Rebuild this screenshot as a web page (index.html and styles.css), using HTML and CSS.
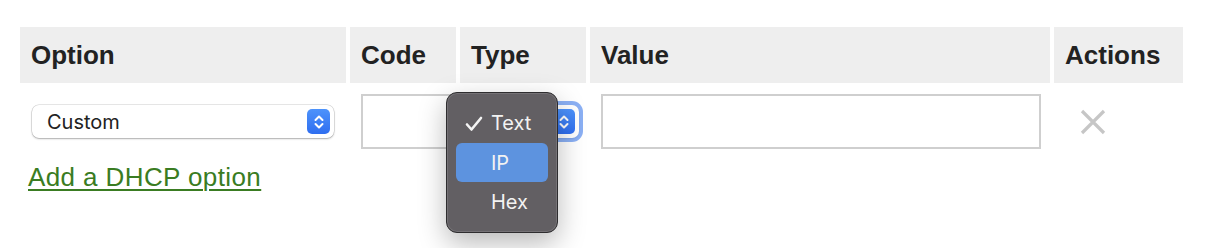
FILE: index.html
```html
<!DOCTYPE html>
<html>
<head>
<meta charset="utf-8">
<link rel="stylesheet" href="styles.css">
</head>
<body>
<div class="grid">
  <div class="th">Option</div>
  <div class="th">Code</div>
  <div class="th">Type</div>
  <div class="th">Value</div>
  <div class="th">Actions</div>

  <div class="td">
    <div class="select wide"><span class="sel-text">Custom</span><span class="stepper"><svg width="12" height="16" viewBox="0 0 12 16"><path d="M2.5 6 L6 2.5 L9.5 6 M2.5 10 L6 13.5 L9.5 10" fill="none" stroke="#fff" stroke-width="2" stroke-linecap="round" stroke-linejoin="round"/></svg></span></div>
  </div>
  <div class="td"><div class="input code"></div></div>
  <div class="td type-cell">
    <div class="select narrow focus"><span class="sel-text"></span><span class="stepper"><svg width="12" height="16" viewBox="0 0 12 16"><path d="M2.5 6 L6 2.5 L9.5 6 M2.5 10 L6 13.5 L9.5 10" fill="none" stroke="#fff" stroke-width="2" stroke-linecap="round" stroke-linejoin="round"/></svg></span></div>
    <div class="menu">
      <div class="item"><svg class="check" width="18" height="16" viewBox="0 0 18 16"><path d="M2 8.5 L6.5 13.5 L16 2" fill="none" stroke="#f4f4f4" stroke-width="2.6" stroke-linecap="round" stroke-linejoin="round"/></svg>Text</div>
      <div class="item active">IP</div>
      <div class="item">Hex</div>
    </div>
  </div>
  <div class="td"><div class="input value"></div></div>
  <div class="td actions"><svg class="x" width="26" height="26" viewBox="0 0 26 26"><path d="M2 2 L24 24 M24 2 L2 24" stroke="#c6c6c6" stroke-width="3.2"/></svg></div>
</div>
<div class="add"><a href="#">Add a DHCP option</a></div>
</body>
</html>
```
FILE: styles.css
```css
html, body {
  margin: 0;
  padding: 0;
  background: #fff;
}
body {
  padding: 27px 0 0 20px;
  min-height: 248px;
  box-sizing: border-box;
  font-family: "Liberation Sans", Arial, sans-serif;
}
.grid {
  display: grid;
  grid-template-columns: 326px 106px 126px 460px 129px;
  column-gap: 4px;
  width: 1163px;
}
.th {
  background: #eeeeee;
  height: 56px;
  display: flex;
  align-items: center;
  padding-left: 11px;
  font-weight: bold;
  font-size: 26px;
  color: #222;
}
.td {
  height: 75px;
  display: flex;
  align-items: center;
  padding-left: 11px;
  padding-top: 2px;
  box-sizing: border-box;
}
.td.actions {
  padding-left: 26px;
}
.select {
  height: 33px;
  box-sizing: border-box;
  border-radius: 7px;
  background: #fff;
  box-shadow: 0 0 0 0.5px rgba(0,0,0,0.18), 0 1px 2px rgba(0,0,0,0.25);
  display: flex;
  align-items: center;
  justify-content: space-between;
  padding: 0 4px 0 15px;
  font-family: "Inter", "Liberation Sans", sans-serif;
  font-size: 20px;
  color: #222;
}
.select.wide {
  width: 302px;
  margin-left: 1px;
}
.select.narrow {
  width: 108px;
}
.select.focus {
  box-shadow: 0 0 0 4px rgba(100,150,240,0.75), 0 1px 2px rgba(0,0,0,0.25);
}
.stepper {
  width: 23px;
  height: 25px;
  border-radius: 5px;
  background: linear-gradient(#4d93fb, #2f6ef0);
  display: flex;
  align-items: center;
  justify-content: center;
}
.input {
  height: 55px;
  box-sizing: border-box;
  border: 2px solid #cfcfcf;
  background: #fff;
}
.input.code {
  width: 95px;
}
.input.value {
  width: 440px;
}
.type-cell {
  position: relative;
}
.menu {
  position: absolute;
  left: -14px;
  top: 9px;
  width: 112px;
  height: 141px;
  box-sizing: border-box;
  border-radius: 11px;
  background: #625f63;
  border: 1px solid #2e2d2f;
  box-shadow: inset 0 0 0 1px rgba(255,255,255,0.12), 0 10px 28px rgba(0,0,0,0.28);
  padding: 10px 9px;
  display: flex;
  flex-direction: column;
  font-family: "Inter", "Liberation Sans", sans-serif;
  font-size: 20px;
  color: #f2f2f2;
  z-index: 2;
}
.item {
  height: 40px;
  display: flex;
  align-items: center;
  padding-left: 35px;
  position: relative;
  border-radius: 6px;
}
.item.active {
  background: #5d93df;
}
.check {
  position: absolute;
  left: 9px;
  top: 13px;
}
.add {
  padding: 4px 0 0 8px;
}
.add a {
  font-size: 26px;
  letter-spacing: 0.4px;
  color: #3a7c22;
  text-decoration: underline;
  text-underline-offset: 3px;
  text-decoration-thickness: 2px;
}
```
